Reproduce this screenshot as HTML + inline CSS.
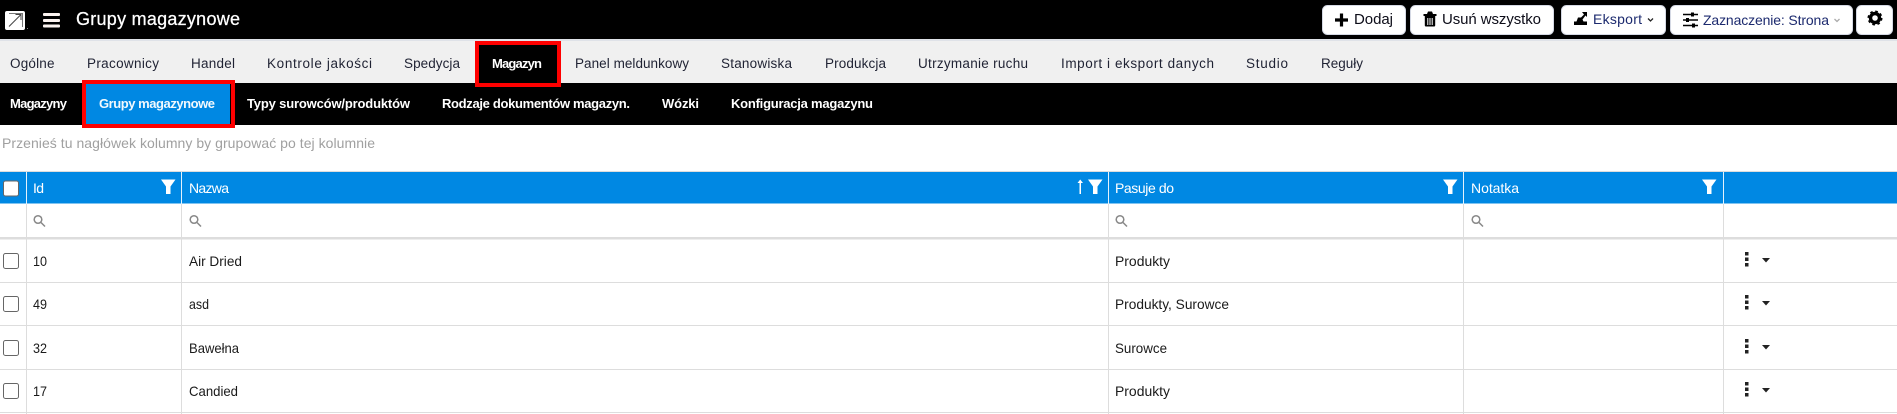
<!DOCTYPE html>
<html lang="pl">
<head>
<meta charset="utf-8">
<title>Grupy magazynowe</title>
<style>
html,body{margin:0;padding:0;width:1897px;height:414px;overflow:hidden;background:#fff}
svg{display:block;position:absolute;left:0;top:0}
text{font-family:"Liberation Sans",sans-serif}
.nav{font-size:13.5px;fill:#1f2233}
.sub{font-size:13px;font-weight:700;fill:#fff}
.btn{font-size:15px;fill:#0c0c18}
.btn2{font-size:14px;fill:#1c2a6e}
.hd{font-size:14px;fill:#fff}
.td{font-size:14px;fill:#1a1a1a}
</style>
</head>
<body>
<svg width="1897" height="414" viewBox="0 0 1897 414" xmlns="http://www.w3.org/2000/svg">
<!-- top bar -->
<rect x="0" y="0" width="1897" height="39" fill="#000"/>
<rect x="0" y="39" width="1897" height="2" fill="#dfe2e8"/>
<rect x="5" y="11" width="20" height="19" rx="2" fill="#fff"/>
<path d="M9 13.500H22.500V27" fill="none" stroke="#777" stroke-width="1"/>
<path d="M9 26.500L21 14.500M15.500 14.500H21V20" fill="none" stroke="#444" stroke-width="1"/>
<rect x="27" y="28" width="1" height="1" fill="#888"/>
<rect x="43" y="13" width="17" height="3" rx="1" fill="#fbf3f0"/>
<rect x="43" y="19" width="17" height="3" rx="1" fill="#fbf3f0"/>
<rect x="43" y="24.500" width="17" height="3" rx="1" fill="#fbf3f0"/>
<text x="76" y="25" font-size="18" fill="#fff" stroke="#fff" stroke-width=".25" textLength="164" lengthAdjust="spacing">Grupy magazynowe</text>

<!-- buttons -->
<g fill="#fff" stroke="#d5d9e4" stroke-width="1">
<rect x="1322.500" y="5.500" width="83" height="29" rx="5"/>
<rect x="1410.500" y="5.500" width="143" height="29" rx="5"/>
<rect x="1561.500" y="5.500" width="104" height="29" rx="5"/>
<rect x="1670.500" y="5.500" width="182" height="29" rx="5"/>
<rect x="1856.500" y="5.500" width="36" height="29" rx="5"/>
</g>
<path d="M1335 20H1348M1341.500 13.500V26.500" stroke="#000" stroke-width="3.200" fill="none"/>
<text class="btn" x="1354" y="24" textLength="39" lengthAdjust="spacing">Dodaj</text>
<path d="M1423.500 14H1436.500V16H1423.500ZM1427 14L1428 11.500H1432L1433 14Z" fill="#000"/>
<path d="M1424.800 16H1435.200V25.500A1 1 0 0 1 1434.200 26.500H1425.800A1 1 0 0 1 1424.800 25.500Z" fill="#000"/>
<path d="M1427.800 18V25M1430 18V25M1432.200 18V25" stroke="#fff" stroke-width="1"/>
<text class="btn" x="1442" y="24" textLength="99" lengthAdjust="spacing">Usuń wszystko</text>

<path d="M1574 21.500H1587V25H1574Z" fill="#000"/>
<path d="M1576.500 21.500L1578 17.500H1581L1584 14.500L1582 12H1587V17L1585.500 15.500L1582.500 19.500L1583.500 21.500Z" fill="#000"/>
<text class="btn2" x="1593" y="24" textLength="49" lengthAdjust="spacing">Eksport</text>
<path d="M1648 18.500L1650.500 21L1653 18.500" fill="none" stroke="#222" stroke-width="1.300"/>

<g stroke="#000" stroke-width="1.500">
<path d="M1683 14.500H1698M1683 20H1698M1683 25.500H1698"/>
</g>
<g fill="#000">
<rect x="1691" y="12.500" width="3" height="4"/>
<rect x="1686" y="18" width="3" height="4"/>
<rect x="1692" y="23.500" width="3" height="4"/>
</g>
<text class="btn2" x="1703" y="25" textLength="126" lengthAdjust="spacing">Zaznaczenie: Strona</text>
<path d="M1834.500 19L1837 21.500L1839.500 19" fill="none" stroke="#aaa" stroke-width="1.300"/>

<circle cx="1875" cy="18" r="4.500" fill="none" stroke="#000" stroke-width="3.400"/>
<circle cx="1875" cy="18" r="6.300" fill="none" stroke="#000" stroke-width="2.400" stroke-dasharray="2.500 2.450"/>

<!-- main nav -->
<rect x="0" y="41" width="1897" height="42" fill="#f0f0f0"/>
<g class="nav">
<text class="nav" x="10" y="68" textLength="44.500" lengthAdjust="spacing">Ogólne</text>
<text class="nav" x="87" y="68" textLength="72" lengthAdjust="spacing">Pracownicy</text>
<text class="nav" x="191" y="68" textLength="44" lengthAdjust="spacing">Handel</text>
<text class="nav" x="267" y="68" textLength="105" lengthAdjust="spacing">Kontrole jakości</text>
<text class="nav" x="404" y="68" textLength="56" lengthAdjust="spacing">Spedycja</text>
<text class="nav" x="575" y="68" textLength="114" lengthAdjust="spacing">Panel meldunkowy</text>
<text class="nav" x="721" y="68" textLength="71" lengthAdjust="spacing">Stanowiska</text>
<text class="nav" x="825" y="68" textLength="61" lengthAdjust="spacing">Produkcja</text>
<text class="nav" x="918" y="68" textLength="110" lengthAdjust="spacing">Utrzymanie ruchu</text>
<text class="nav" x="1061" y="68" textLength="153" lengthAdjust="spacing">Import i eksport danych</text>
<text class="nav" x="1246" y="68" textLength="42" lengthAdjust="spacing">Studio</text>
<text class="nav" x="1321" y="68" textLength="42" lengthAdjust="spacing">Reguły</text>
</g>

<!-- sub nav -->
<rect x="0" y="83" width="1897" height="42" fill="#000"/>
<rect x="475" y="41" width="86" height="46" fill="#f00"/>
<rect x="479" y="45" width="78" height="38" fill="#000"/>
<text class="sub" x="492" y="68" textLength="50" lengthAdjust="spacing">Magazyn</text>

<rect x="82" y="80" width="153" height="48" fill="#f00"/>
<rect x="86" y="84" width="145" height="40" fill="#0088e3"/>
<rect x="230" y="84" width="1" height="40" fill="#000"/>
<text class="sub" x="10" y="108" textLength="57" lengthAdjust="spacing">Magazyny</text>
<text class="sub" x="99" y="108" textLength="116" lengthAdjust="spacing" fill-opacity=".95">Grupy magazynowe</text>
<text class="sub" x="247" y="108" textLength="163" lengthAdjust="spacing">Typy surowców/produktów</text>
<text class="sub" x="442" y="108" textLength="188" lengthAdjust="spacing">Rodzaje dokumentów magazyn.</text>
<text class="sub" x="662" y="108" textLength="37" lengthAdjust="spacing">Wózki</text>
<text class="sub" x="731" y="108" textLength="142" lengthAdjust="spacing">Konfiguracja magazynu</text>

<!-- group panel -->
<text x="2" y="148" font-size="14" fill="#a0a0a0" textLength="373" lengthAdjust="spacing">Przenieś tu nagłówek kolumny by grupować po tej kolumnie</text>

<!-- grid -->
<rect x="0" y="171" width="1897" height="1" fill="#ddd"/>
<rect x="0" y="172" width="1897" height="31.500" fill="#0088e3"/>
<rect x="0" y="237" width="1897" height="2.500" fill="#ddd"/>
<g fill="#ddd">
<rect x="0" y="282" width="1897" height="1"/>
<rect x="0" y="325" width="1897" height="1"/>
<rect x="0" y="369" width="1897" height="1"/>
<rect x="0" y="412" width="1897" height="1"/>
<rect x="26" y="204" width="1" height="210"/>
<rect x="181" y="204" width="1" height="210"/>
<rect x="1108" y="204" width="1" height="210"/>
<rect x="1463" y="204" width="1" height="210"/>
<rect x="1723" y="204" width="1" height="210"/>
</g>
<g fill="#e4f2fc">
<rect x="26" y="172" width="1" height="32"/>
<rect x="181" y="172" width="1" height="32"/>
<rect x="1108" y="172" width="1" height="32"/>
<rect x="1463" y="172" width="1" height="32"/>
<rect x="1723" y="172" width="1" height="32"/>
</g>

<!-- header -->
<rect x="3.500" y="181" width="15" height="15" rx="2" fill="#fff" stroke="#666" stroke-width="1"/>
<text class="hd" x="33" y="193" textLength="11" lengthAdjust="spacing">Id</text>
<text class="hd" x="189" y="193" textLength="40" lengthAdjust="spacing">Nazwa</text>
<text class="hd" x="1115" y="193" textLength="59" lengthAdjust="spacing">Pasuje do</text>
<text class="hd" x="1471" y="193" textLength="48" lengthAdjust="spacing">Notatka</text>
<g fill="#fff">
<path d="M161 179.500H175.500L170.500 186.500V194H166V186.500Z"/>
<path d="M1088 179.500H1102.500L1097.500 186.500V194H1093V186.500Z"/>
<path d="M1443 179.500H1457.500L1452.500 186.500V194H1448V186.500Z"/>
<path d="M1702 179.500H1716.500L1711.500 186.500V194H1707V186.500Z"/>
<path d="M1079.500 194V183H1077.500L1080.200 179.500L1083 183H1081V194Z"/>
</g>

<!-- search -->
<g fill="none" stroke="#888" stroke-width="1.500">
<circle cx="38" cy="219.500" r="3.800"/><path d="M41 222.500L45 226.500"/>
<circle cx="194" cy="219.500" r="3.800"/><path d="M197 222.500L201 226.500"/>
<circle cx="1120" cy="219.500" r="3.800"/><path d="M1123 222.500L1127 226.500"/>
<circle cx="1476" cy="219.500" r="3.800"/><path d="M1479 222.500L1483 226.500"/>
</g>

<!-- checkboxes -->
<g fill="#fff" stroke="#666" stroke-width="1">
<rect x="3.500" y="253.500" width="15" height="15" rx="2"/>
<rect x="3.500" y="296.500" width="15" height="15" rx="2"/>
<rect x="3.500" y="340.500" width="15" height="15" rx="2"/>
<rect x="3.500" y="383.500" width="15" height="15" rx="2"/>
</g>

<!-- rows -->
<text class="td" x="33" y="266" textLength="14" lengthAdjust="spacingAndGlyphs">10</text>
<text class="td" x="189" y="266" textLength="53" lengthAdjust="spacingAndGlyphs">Air Dried</text>
<text class="td" x="1115" y="266" textLength="55" lengthAdjust="spacingAndGlyphs">Produkty</text>
<text class="td" x="33" y="309" textLength="14" lengthAdjust="spacingAndGlyphs">49</text>
<text class="td" x="189" y="309" textLength="20" lengthAdjust="spacingAndGlyphs">asd</text>
<text class="td" x="1115" y="309" textLength="114" lengthAdjust="spacingAndGlyphs">Produkty, Surowce</text>
<text class="td" x="33" y="353" textLength="14" lengthAdjust="spacingAndGlyphs">32</text>
<text class="td" x="189" y="353" textLength="50" lengthAdjust="spacingAndGlyphs">Bawełna</text>
<text class="td" x="1115" y="353" textLength="52" lengthAdjust="spacingAndGlyphs">Surowce</text>
<text class="td" x="33" y="396" textLength="14" lengthAdjust="spacingAndGlyphs">17</text>
<text class="td" x="189" y="396" textLength="49" lengthAdjust="spacingAndGlyphs">Candied</text>
<text class="td" x="1115" y="396" textLength="55" lengthAdjust="spacingAndGlyphs">Produkty</text>

<!-- row actions -->
<g fill="#222">
<rect x="1745" y="252" width="3.500" height="3.500"/><rect x="1745" y="257.500" width="3.500" height="3.500"/><rect x="1745" y="263" width="3.500" height="3.500"/>
<path d="M1762 258H1770L1766 262.500Z"/>
<rect x="1745" y="295" width="3.500" height="3.500"/><rect x="1745" y="300.500" width="3.500" height="3.500"/><rect x="1745" y="306" width="3.500" height="3.500"/>
<path d="M1762 301H1770L1766 305.500Z"/>
<rect x="1745" y="339" width="3.500" height="3.500"/><rect x="1745" y="344.500" width="3.500" height="3.500"/><rect x="1745" y="350" width="3.500" height="3.500"/>
<path d="M1762 345H1770L1766 349.500Z"/>
<rect x="1745" y="382" width="3.500" height="3.500"/><rect x="1745" y="387.500" width="3.500" height="3.500"/><rect x="1745" y="393" width="3.500" height="3.500"/>
<path d="M1762 388H1770L1766 392.500Z"/>
</g>
</svg>
</body>
</html>
